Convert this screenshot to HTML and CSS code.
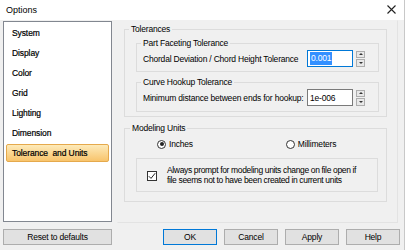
FILE: index.html
```html
<!DOCTYPE html>
<html>
<head>
<meta charset="utf-8">
<link rel="stylesheet" href="styles.css">
</head>
<body>
<div class="window">
  <div class="titlebar">
    <span class="title">Options</span>
    <svg class="close" width="9" height="9" viewBox="0 0 9 9"><path d="M0.5 0.5 L8.5 8.5 M8.5 0.5 L0.5 8.5" stroke="#222" stroke-width="1.1" fill="none"/></svg>
  </div>
  <div class="main">
    <ul class="list">
      <li>System</li>
      <li>Display</li>
      <li>Color</li>
      <li>Grid</li>
      <li>Lighting</li>
      <li>Dimension</li>
      <li class="selected">Tolerance&nbsp; and Units</li>
    </ul>
    <div class="panel">
      <fieldset class="group outer">
        <legend>Tolerances</legend>
        <fieldset class="group inner first">
          <legend>Part Faceting Tolerance</legend>
          <div class="row">
            <span class="label">Chordal Deviation / Chord Height Tolerance</span>
            <span class="input focused"><span class="sel">0.001</span></span>
            <span class="spin"><span class="sb up"></span><span class="sb down"></span></span>
          </div>
        </fieldset>
        <fieldset class="group inner second">
          <legend>Curve Hookup Tolerance</legend>
          <div class="row">
            <span class="label">Minimum distance between ends for hookup:</span>
            <span class="input">1e-006</span>
            <span class="spin"><span class="sb up"></span><span class="sb down"></span></span>
          </div>
        </fieldset>
      </fieldset>
      <fieldset class="group units">
        <legend>Modeling Units</legend>
        <div class="radios">
          <span class="radio-item inches"><span class="radio checked"></span>Inches</span>
          <span class="radio-item mm"><span class="radio"></span>Millimeters</span>
        </div>
        <div class="checkbox-box">
          <span class="checkbox"><svg width="8" height="8" viewBox="0 0 8 8"><path d="M0.8 4.2 L3 6.4 L7.2 1.2" stroke="#222" stroke-width="1" fill="none"/></svg></span>
          <span class="cb-text">Always prompt for modeling units change on file open if<br>file seems not to have been created in current units</span>
        </div>
      </fieldset>
    </div>
  </div>
  <div class="footer">
    <span class="btn reset">Reset to defaults</span>
    <div class="btns">
      <span class="btn ok">OK</span>
      <span class="btn">Cancel</span>
      <span class="btn">Apply</span>
      <span class="btn">Help</span>
    </div>
  </div>
</div>
</body>
</html>
```
FILE: styles.css
```css
html, body {
  margin: 0;
  padding: 0;
}
body {
  font-family: "Liberation Sans", Arial, sans-serif;
  font-size: 8.5px;
  letter-spacing: -0.2px;
  color: #000;
  background: #f0f0f0;
}
.window {
  width: 405px;
  height: 250px;
  background: #f0f0f0;
  overflow: hidden;
  box-sizing: border-box;
  border-right: 1px solid #c8c8c8;
}
.titlebar {
  height: 20px;
  background: #fff;
  display: flex;
  align-items: center;
  justify-content: space-between;
  padding: 0 8px 1px 6px;
  box-sizing: border-box;
}
.title {
  font-size: 9px;
  letter-spacing: 0;
}
.close {
  display: block;
}
.main {
  display: flex;
  height: 203px;
}
.list {
  list-style: none;
  margin: 1px 0 0 3px;
  padding: 2px 2px;
  width: 109px;
  height: 201px;
  box-sizing: border-box;
  background: #fff;
  border: 1px solid #828790;
}
.list li {
  height: 18px;
  line-height: 18px;
  margin-bottom: 2px;
  padding-left: 6px;
  box-sizing: border-box;
  letter-spacing: -0.1px;
  -webkit-text-stroke: 0.2px #000;
}
.list li.selected {
  background: linear-gradient(#fdeab9, #f8c46c);
  border: 1px solid #e5a94c;
  border-radius: 2px;
  padding-left: 5px;
  line-height: 16px;
}
.panel {
  margin-left: 5px;
  width: 281px;
  height: 203px;
  box-sizing: border-box;
  border: 1px solid #e3e3e3;
  border-left-color: #f0f0f0;
  border-top-color: #f0f0f0;
  padding: 3px 0 0 6px;
}
.group {
  margin: 0;
  padding: 0;
  min-inline-size: 0;
  border: 1px solid #dcdcdc;
  box-sizing: border-box;
}
.group legend {
  padding: 0 2px;
  line-height: 11px;
  height: 11px;
}
.outer {
  width: 263px;
  padding: 0 7px 4px 11px;
}
.outer > legend {
  margin-left: -7px;
}
.inner {
  width: 243px;
  padding: 0 0 4px 6px;
}
.inner > legend {
  margin-left: -2px;
}
.first {
  margin-top: 3px;
}
.second {
  margin-top: 5px;
  padding-bottom: 5px;
}
.row {
  display: flex;
  align-items: center;
  height: 17px;
  margin-top: 1px;
}
.label {
  width: 164px;
  white-space: nowrap;
}
.input {
  width: 46px;
  height: 17px;
  box-sizing: border-box;
  border: 1px solid #7a7a7a;
  background: #fff;
  display: flex;
  align-items: center;
  padding-left: 2px;
}
.input.focused {
  border-color: #0078d7;
}
.sel {
  background: #3390ff;
  color: #fff;
  padding: 1px 1px;
  line-height: 11px;
}
.spin {
  display: flex;
  flex-direction: column;
  gap: 1px;
  margin-left: 3px;
  height: 16px;
}
.sb {
  width: 9px;
  height: 7.5px;
  box-sizing: border-box;
  border: 1px solid #adadad;
  background: #e8e8e8;
  position: relative;
}
.sb::after {
  content: "";
  position: absolute;
  left: 2px;
  width: 0;
  height: 0;
  border-left: 2px solid transparent;
  border-right: 2px solid transparent;
}
.sb.up::after {
  top: 1.5px;
  border-bottom: 2px solid #333;
}
.sb.down::after {
  top: 2px;
  border-top: 2px solid #333;
}
.units {
  margin-top: 6px;
  width: 263px;
  height: 79px;
  padding: 0 8px 0 11px;
}
.units > legend {
  margin-left: -6px;
}
.radios {
  display: flex;
  height: 12px;
  align-items: center;
  margin-top: 4px;
}
.radio-item {
  display: flex;
  align-items: center;
}
.inches {
  margin-left: 21px;
}
.mm {
  margin-left: 93px;
}
.radio {
  width: 9px;
  height: 9px;
  box-sizing: border-box;
  border: 1px solid #333;
  border-radius: 50%;
  background: #fff;
  margin-right: 3px;
  position: relative;
}
.radio.checked::after {
  content: "";
  position: absolute;
  left: 1.5px;
  top: 1.5px;
  width: 4px;
  height: 4px;
  border-radius: 50%;
  background: #222;
}
.checkbox-box {
  margin-top: 8px;
  height: 34px;
  border: 1px solid #dcdcdc;
  box-sizing: border-box;
  display: flex;
  align-items: center;
  padding-left: 10px;
}
.checkbox {
  width: 10px;
  height: 10px;
  box-sizing: border-box;
  border: 1px solid #333;
  background: #fff;
  display: flex;
  align-items: center;
  justify-content: center;
  margin-right: 10px;
  margin-top: 2px;
}
.checkbox svg {
  display: block;
}
.cb-text {
  line-height: 10px;
  white-space: nowrap;
  letter-spacing: -0.35px;
}
.footer {
  display: flex;
  margin-top: 6px;
  padding-left: 3px;
}
.btn {
  height: 16px;
  width: 54px;
  box-sizing: border-box;
  border: 1px solid #adadad;
  background: #e1e1e1;
  display: flex;
  align-items: center;
  justify-content: center;
}
.btn.reset {
  width: 109px;
}
.btn.ok {
  border-color: #0078d7;
}
.btns {
  display: flex;
  gap: 7px;
  margin-left: 51px;
}
```
